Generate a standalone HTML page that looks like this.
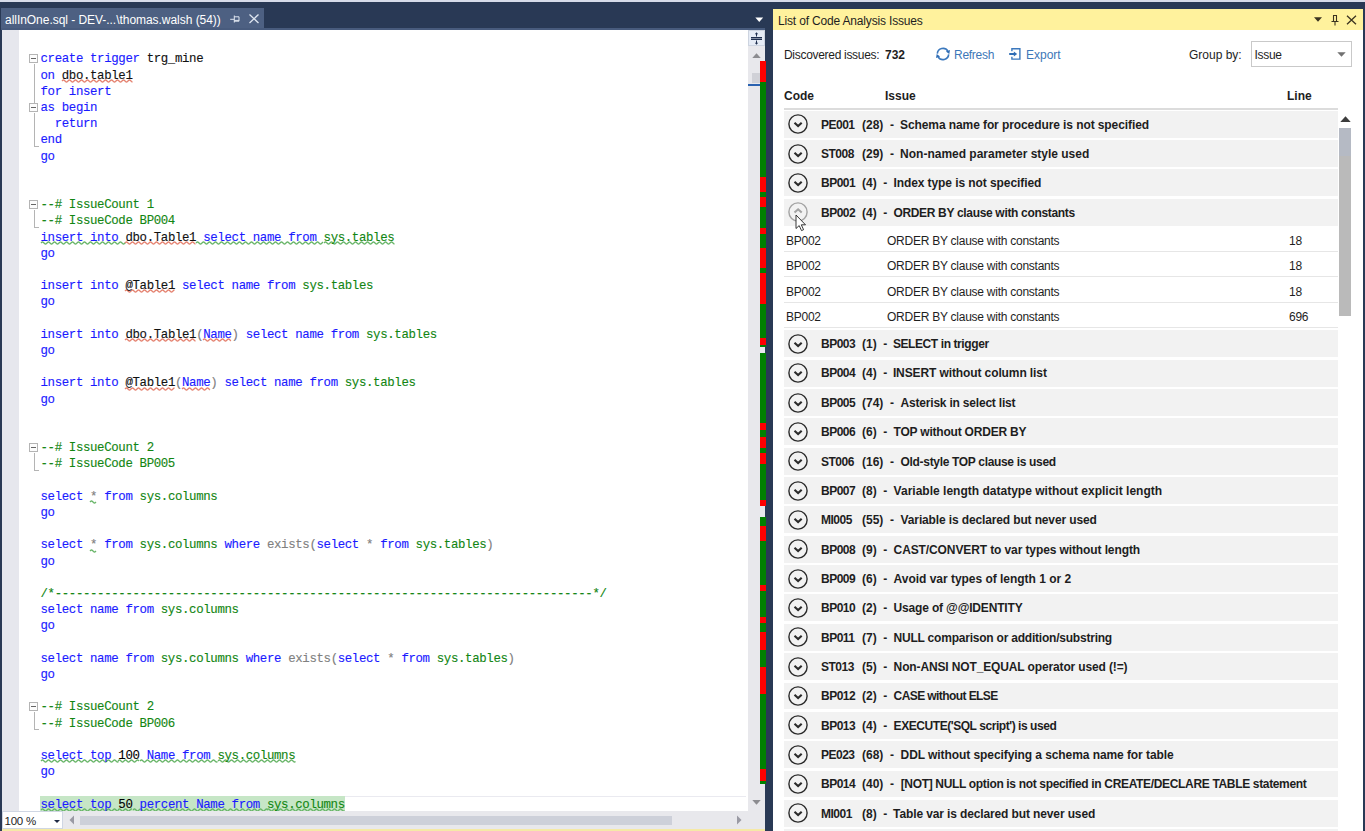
<!DOCTYPE html><html><head><meta charset="utf-8"><style>

html,body{margin:0;padding:0;}
body{width:1365px;height:831px;overflow:hidden;position:relative;background:#293955;font-family:"Liberation Sans",sans-serif;}
.ab{position:absolute;}
.code{position:absolute;left:40.5px;font-family:"Liberation Mono",monospace;font-size:12.4px;letter-spacing:-0.36px;-webkit-text-stroke:0.12px currentColor;line-height:16px;height:16px;white-space:pre;}
.k{color:#1a1aff}.i{color:#111}.c{color:#128612}.s{color:#128612}.o{color:#808080}.n{color:#000}
.sqr{text-decoration:underline wavy #e0321e;text-decoration-thickness:1px;text-underline-offset:2px;text-decoration-skip-ink:none;}
.sqg{text-decoration:underline wavy #3fa83f;text-decoration-thickness:1px;text-underline-offset:2px;text-decoration-skip-ink:none;}
.grp{position:absolute;left:784px;width:554px;height:26.9px;margin-top:0.2px;background:#f2f2f2;}
.gt{position:absolute;left:37px;top:0;font:bold 12px "Liberation Sans",sans-serif;color:#1e1e1e;white-space:pre;line-height:16px;}
.child{position:absolute;left:784px;width:554px;height:25.27px;border-bottom:1.5px solid #e6e6e6;box-sizing:border-box;}
.gtx{position:absolute;font:bold 12px "Liberation Sans",sans-serif;line-height:16px;color:#1e1e1e;white-space:pre;}
.ct{position:absolute;letter-spacing:-0.25px;font:12px "Liberation Sans",sans-serif;color:#1e1e1e;white-space:pre;line-height:16px;}

</style></head><body>
<div class="ab" style="left:0;top:0;width:1365px;height:2px;background:#d6dbe9"></div>
<div class="ab" style="left:1px;top:8px;width:263px;height:20px;background:#4d6082"></div>
<div class="ab" style="left:1px;top:27.5px;width:764px;height:2.5px;background:#485b7d"></div>
<div class="ab" style="left:5px;top:11.7px;font-size:12px;line-height:16px;color:#fff;letter-spacing:-0.04px;white-space:pre">allInOne.sql - DEV-...\thomas.walsh (54))</div>
<svg class="ab" style="left:229px;top:14px" width="12" height="10" viewBox="0 0 12 10"><path d="M1.2 5.3H5.3M5.3 1.5V8.5M5.3 2.8H10V7.2H5.3M5.3 6.4H10" fill="none" stroke="#dfe6f0" stroke-width="1"/></svg>
<svg class="ab" style="left:248px;top:13px" width="12" height="11" viewBox="0 0 12 11"><path d="M1.5 1.5L10.5 10M10.5 1.5L1.5 10" fill="none" stroke="#dfe6f0" stroke-width="1.3"/></svg>
<svg class="ab" style="left:755px;top:17px" width="9" height="6" viewBox="0 0 9 6"><path d="M0.3 0.5H8.2L4.25 5z" fill="#fff"/></svg>
<div class="ab" style="left:2px;top:30px;width:746px;height:781px;background:#fff"></div>
<div class="ab" style="left:2px;top:30px;width:17px;height:781px;background:#e6e7ed"></div>
<div class="ab" style="left:40px;top:796px;width:706px;height:15px;border-top:1px solid #eaeaf0;"></div>
<div class="ab" style="left:40px;top:795.5px;width:305px;height:16px;background:#c6e6c6"></div>
<div class="ab" style="left:29px;top:54px;width:7px;height:7px;border:1px solid #b4b4b4;background:#fcfcfc"></div>
<div class="ab" style="left:31px;top:58px;width:5px;height:1px;background:#666"></div>
<div class="ab" style="left:34px;top:64px;width:1px;height:39px;background:#b4b4b4"></div>
<div class="ab" style="left:29px;top:103px;width:7px;height:7px;border:1px solid #b4b4b4;background:#fcfcfc"></div>
<div class="ab" style="left:31px;top:107px;width:5px;height:1px;background:#666"></div>
<div class="ab" style="left:34px;top:113px;width:1px;height:34px;background:#b4b4b4"></div>
<div class="ab" style="left:34px;top:146px;width:4.5px;height:1px;background:#b4b4b4"></div>
<div class="ab" style="left:29px;top:200px;width:7px;height:7px;border:1px solid #b4b4b4;background:#fcfcfc"></div>
<div class="ab" style="left:31px;top:204px;width:5px;height:1px;background:#666"></div>
<div class="ab" style="left:34px;top:210px;width:1px;height:18px;background:#b4b4b4"></div>
<div class="ab" style="left:34px;top:227px;width:4.5px;height:1px;background:#b4b4b4"></div>
<div class="ab" style="left:29px;top:443px;width:7px;height:7px;border:1px solid #b4b4b4;background:#fcfcfc"></div>
<div class="ab" style="left:31px;top:447px;width:5px;height:1px;background:#666"></div>
<div class="ab" style="left:34px;top:453px;width:1px;height:18px;background:#b4b4b4"></div>
<div class="ab" style="left:34px;top:470px;width:4.5px;height:1px;background:#b4b4b4"></div>
<div class="ab" style="left:29px;top:702px;width:7px;height:7px;border:1px solid #b4b4b4;background:#fcfcfc"></div>
<div class="ab" style="left:31px;top:706px;width:5px;height:1px;background:#666"></div>
<div class="ab" style="left:34px;top:712px;width:1px;height:18px;background:#b4b4b4"></div>
<div class="ab" style="left:34px;top:729px;width:4.5px;height:1px;background:#b4b4b4"></div>
<div class="code" style="top:51.40px"><span class="k">create trigger </span><span class="i">trg_mine</span></div>
<svg class="ab" style="left:61.74px;top:78.80px;overflow:visible" width="71" height="4"><polyline points="0.00,2.00 0.50,1.50 1.00,1.13 1.50,1.00 2.00,1.13 2.50,1.50 3.00,2.00 3.50,2.50 4.00,2.87 4.50,3.00 5.00,2.87 5.50,2.50 6.00,2.00 6.50,1.50 7.00,1.13 7.50,1.00 8.00,1.13 8.50,1.50 9.00,2.00 9.50,2.50 10.00,2.87 10.50,3.00 11.00,2.87 11.50,2.50 12.00,2.00 12.50,1.50 13.00,1.13 13.50,1.00 14.00,1.13 14.50,1.50 15.00,2.00 15.50,2.50 16.00,2.87 16.50,3.00 17.00,2.87 17.50,2.50 18.00,2.00 18.50,1.50 19.00,1.13 19.50,1.00 20.00,1.13 20.50,1.50 21.00,2.00 21.50,2.50 22.00,2.87 22.50,3.00 23.00,2.87 23.50,2.50 24.00,2.00 24.50,1.50 25.00,1.13 25.50,1.00 26.00,1.13 26.50,1.50 27.00,2.00 27.50,2.50 28.00,2.87 28.50,3.00 29.00,2.87 29.50,2.50 30.00,2.00 30.50,1.50 31.00,1.13 31.50,1.00 32.00,1.13 32.50,1.50 33.00,2.00 33.50,2.50 34.00,2.87 34.50,3.00 35.00,2.87 35.50,2.50 36.00,2.00 36.50,1.50 37.00,1.13 37.50,1.00 38.00,1.13 38.50,1.50 39.00,2.00 39.50,2.50 40.00,2.87 40.50,3.00 41.00,2.87 41.50,2.50 42.00,2.00 42.50,1.50 43.00,1.13 43.50,1.00 44.00,1.13 44.50,1.50 45.00,2.00 45.50,2.50 46.00,2.87 46.50,3.00 47.00,2.87 47.50,2.50 48.00,2.00 48.50,1.50 49.00,1.13 49.50,1.00 50.00,1.13 50.50,1.50 51.00,2.00 51.50,2.50 52.00,2.87 52.50,3.00 53.00,2.87 53.50,2.50 54.00,2.00 54.50,1.50 55.00,1.13 55.50,1.00 56.00,1.13 56.50,1.50 57.00,2.00 57.50,2.50 58.00,2.87 58.50,3.00 59.00,2.87 59.50,2.50 60.00,2.00 60.50,1.50 61.00,1.13 61.50,1.00 62.00,1.13 62.50,1.50 63.00,2.00 63.50,2.50 64.00,2.87 64.50,3.00 65.00,2.87 65.50,2.50 66.00,2.00 66.50,1.50 67.00,1.13 67.50,1.00 68.00,1.13 68.50,1.50 69.00,2.00 69.50,2.50 70.00,2.87 70.50,3.00" fill="none" stroke="#e4806e" stroke-width="1.3"/></svg>
<div class="code" style="top:67.60px"><span class="k">on </span><span class="i">dbo.table1</span></div>
<div class="code" style="top:83.80px"><span class="k">for insert</span></div>
<div class="code" style="top:100.00px"><span class="k">as begin</span></div>
<div class="code" style="top:116.20px"><span class="k">  return</span></div>
<div class="code" style="top:132.40px"><span class="k">end</span></div>
<div class="code" style="top:148.60px"><span class="k">go</span></div>
<div class="code" style="top:197.20px"><span class="c">--# IssueCount 1</span></div>
<div class="code" style="top:213.40px"><span class="c">--# IssueCode BP004</span></div>
<svg class="ab" style="left:40.5px;top:240.80px;overflow:visible" width="85" height="4"><polyline points="0.00,2.00 0.50,1.50 1.00,1.13 1.50,1.00 2.00,1.13 2.50,1.50 3.00,2.00 3.50,2.50 4.00,2.87 4.50,3.00 5.00,2.87 5.50,2.50 6.00,2.00 6.50,1.50 7.00,1.13 7.50,1.00 8.00,1.13 8.50,1.50 9.00,2.00 9.50,2.50 10.00,2.87 10.50,3.00 11.00,2.87 11.50,2.50 12.00,2.00 12.50,1.50 13.00,1.13 13.50,1.00 14.00,1.13 14.50,1.50 15.00,2.00 15.50,2.50 16.00,2.87 16.50,3.00 17.00,2.87 17.50,2.50 18.00,2.00 18.50,1.50 19.00,1.13 19.50,1.00 20.00,1.13 20.50,1.50 21.00,2.00 21.50,2.50 22.00,2.87 22.50,3.00 23.00,2.87 23.50,2.50 24.00,2.00 24.50,1.50 25.00,1.13 25.50,1.00 26.00,1.13 26.50,1.50 27.00,2.00 27.50,2.50 28.00,2.87 28.50,3.00 29.00,2.87 29.50,2.50 30.00,2.00 30.50,1.50 31.00,1.13 31.50,1.00 32.00,1.13 32.50,1.50 33.00,2.00 33.50,2.50 34.00,2.87 34.50,3.00 35.00,2.87 35.50,2.50 36.00,2.00 36.50,1.50 37.00,1.13 37.50,1.00 38.00,1.13 38.50,1.50 39.00,2.00 39.50,2.50 40.00,2.87 40.50,3.00 41.00,2.87 41.50,2.50 42.00,2.00 42.50,1.50 43.00,1.13 43.50,1.00 44.00,1.13 44.50,1.50 45.00,2.00 45.50,2.50 46.00,2.87 46.50,3.00 47.00,2.87 47.50,2.50 48.00,2.00 48.50,1.50 49.00,1.13 49.50,1.00 50.00,1.13 50.50,1.50 51.00,2.00 51.50,2.50 52.00,2.87 52.50,3.00 53.00,2.87 53.50,2.50 54.00,2.00 54.50,1.50 55.00,1.13 55.50,1.00 56.00,1.13 56.50,1.50 57.00,2.00 57.50,2.50 58.00,2.87 58.50,3.00 59.00,2.87 59.50,2.50 60.00,2.00 60.50,1.50 61.00,1.13 61.50,1.00 62.00,1.13 62.50,1.50 63.00,2.00 63.50,2.50 64.00,2.87 64.50,3.00 65.00,2.87 65.50,2.50 66.00,2.00 66.50,1.50 67.00,1.13 67.50,1.00 68.00,1.13 68.50,1.50 69.00,2.00 69.50,2.50 70.00,2.87 70.50,3.00 71.00,2.87 71.50,2.50 72.00,2.00 72.50,1.50 73.00,1.13 73.50,1.00 74.00,1.13 74.50,1.50 75.00,2.00 75.50,2.50 76.00,2.87 76.50,3.00 77.00,2.87 77.50,2.50 78.00,2.00 78.50,1.50 79.00,1.13 79.50,1.00 80.00,1.13 80.50,1.50 81.00,2.00 81.50,2.50 82.00,2.87 82.50,3.00 83.00,2.87 83.50,2.50 84.00,2.00 84.50,1.50" fill="none" stroke="#66b466" stroke-width="1.3"/></svg>
<svg class="ab" style="left:125.46000000000001px;top:240.80px;overflow:visible" width="71" height="4"><polyline points="0.00,2.00 0.50,1.50 1.00,1.13 1.50,1.00 2.00,1.13 2.50,1.50 3.00,2.00 3.50,2.50 4.00,2.87 4.50,3.00 5.00,2.87 5.50,2.50 6.00,2.00 6.50,1.50 7.00,1.13 7.50,1.00 8.00,1.13 8.50,1.50 9.00,2.00 9.50,2.50 10.00,2.87 10.50,3.00 11.00,2.87 11.50,2.50 12.00,2.00 12.50,1.50 13.00,1.13 13.50,1.00 14.00,1.13 14.50,1.50 15.00,2.00 15.50,2.50 16.00,2.87 16.50,3.00 17.00,2.87 17.50,2.50 18.00,2.00 18.50,1.50 19.00,1.13 19.50,1.00 20.00,1.13 20.50,1.50 21.00,2.00 21.50,2.50 22.00,2.87 22.50,3.00 23.00,2.87 23.50,2.50 24.00,2.00 24.50,1.50 25.00,1.13 25.50,1.00 26.00,1.13 26.50,1.50 27.00,2.00 27.50,2.50 28.00,2.87 28.50,3.00 29.00,2.87 29.50,2.50 30.00,2.00 30.50,1.50 31.00,1.13 31.50,1.00 32.00,1.13 32.50,1.50 33.00,2.00 33.50,2.50 34.00,2.87 34.50,3.00 35.00,2.87 35.50,2.50 36.00,2.00 36.50,1.50 37.00,1.13 37.50,1.00 38.00,1.13 38.50,1.50 39.00,2.00 39.50,2.50 40.00,2.87 40.50,3.00 41.00,2.87 41.50,2.50 42.00,2.00 42.50,1.50 43.00,1.13 43.50,1.00 44.00,1.13 44.50,1.50 45.00,2.00 45.50,2.50 46.00,2.87 46.50,3.00 47.00,2.87 47.50,2.50 48.00,2.00 48.50,1.50 49.00,1.13 49.50,1.00 50.00,1.13 50.50,1.50 51.00,2.00 51.50,2.50 52.00,2.87 52.50,3.00 53.00,2.87 53.50,2.50 54.00,2.00 54.50,1.50 55.00,1.13 55.50,1.00 56.00,1.13 56.50,1.50 57.00,2.00 57.50,2.50 58.00,2.87 58.50,3.00 59.00,2.87 59.50,2.50 60.00,2.00 60.50,1.50 61.00,1.13 61.50,1.00 62.00,1.13 62.50,1.50 63.00,2.00 63.50,2.50 64.00,2.87 64.50,3.00 65.00,2.87 65.50,2.50 66.00,2.00 66.50,1.50 67.00,1.13 67.50,1.00 68.00,1.13 68.50,1.50 69.00,2.00 69.50,2.50 70.00,2.87 70.50,3.00" fill="none" stroke="#e4806e" stroke-width="1.3"/></svg>
<svg class="ab" style="left:196.26px;top:240.80px;overflow:visible" width="127" height="4"><polyline points="0.00,2.00 0.50,1.50 1.00,1.13 1.50,1.00 2.00,1.13 2.50,1.50 3.00,2.00 3.50,2.50 4.00,2.87 4.50,3.00 5.00,2.87 5.50,2.50 6.00,2.00 6.50,1.50 7.00,1.13 7.50,1.00 8.00,1.13 8.50,1.50 9.00,2.00 9.50,2.50 10.00,2.87 10.50,3.00 11.00,2.87 11.50,2.50 12.00,2.00 12.50,1.50 13.00,1.13 13.50,1.00 14.00,1.13 14.50,1.50 15.00,2.00 15.50,2.50 16.00,2.87 16.50,3.00 17.00,2.87 17.50,2.50 18.00,2.00 18.50,1.50 19.00,1.13 19.50,1.00 20.00,1.13 20.50,1.50 21.00,2.00 21.50,2.50 22.00,2.87 22.50,3.00 23.00,2.87 23.50,2.50 24.00,2.00 24.50,1.50 25.00,1.13 25.50,1.00 26.00,1.13 26.50,1.50 27.00,2.00 27.50,2.50 28.00,2.87 28.50,3.00 29.00,2.87 29.50,2.50 30.00,2.00 30.50,1.50 31.00,1.13 31.50,1.00 32.00,1.13 32.50,1.50 33.00,2.00 33.50,2.50 34.00,2.87 34.50,3.00 35.00,2.87 35.50,2.50 36.00,2.00 36.50,1.50 37.00,1.13 37.50,1.00 38.00,1.13 38.50,1.50 39.00,2.00 39.50,2.50 40.00,2.87 40.50,3.00 41.00,2.87 41.50,2.50 42.00,2.00 42.50,1.50 43.00,1.13 43.50,1.00 44.00,1.13 44.50,1.50 45.00,2.00 45.50,2.50 46.00,2.87 46.50,3.00 47.00,2.87 47.50,2.50 48.00,2.00 48.50,1.50 49.00,1.13 49.50,1.00 50.00,1.13 50.50,1.50 51.00,2.00 51.50,2.50 52.00,2.87 52.50,3.00 53.00,2.87 53.50,2.50 54.00,2.00 54.50,1.50 55.00,1.13 55.50,1.00 56.00,1.13 56.50,1.50 57.00,2.00 57.50,2.50 58.00,2.87 58.50,3.00 59.00,2.87 59.50,2.50 60.00,2.00 60.50,1.50 61.00,1.13 61.50,1.00 62.00,1.13 62.50,1.50 63.00,2.00 63.50,2.50 64.00,2.87 64.50,3.00 65.00,2.87 65.50,2.50 66.00,2.00 66.50,1.50 67.00,1.13 67.50,1.00 68.00,1.13 68.50,1.50 69.00,2.00 69.50,2.50 70.00,2.87 70.50,3.00 71.00,2.87 71.50,2.50 72.00,2.00 72.50,1.50 73.00,1.13 73.50,1.00 74.00,1.13 74.50,1.50 75.00,2.00 75.50,2.50 76.00,2.87 76.50,3.00 77.00,2.87 77.50,2.50 78.00,2.00 78.50,1.50 79.00,1.13 79.50,1.00 80.00,1.13 80.50,1.50 81.00,2.00 81.50,2.50 82.00,2.87 82.50,3.00 83.00,2.87 83.50,2.50 84.00,2.00 84.50,1.50 85.00,1.13 85.50,1.00 86.00,1.13 86.50,1.50 87.00,2.00 87.50,2.50 88.00,2.87 88.50,3.00 89.00,2.87 89.50,2.50 90.00,2.00 90.50,1.50 91.00,1.13 91.50,1.00 92.00,1.13 92.50,1.50 93.00,2.00 93.50,2.50 94.00,2.87 94.50,3.00 95.00,2.87 95.50,2.50 96.00,2.00 96.50,1.50 97.00,1.13 97.50,1.00 98.00,1.13 98.50,1.50 99.00,2.00 99.50,2.50 100.00,2.87 100.50,3.00 101.00,2.87 101.50,2.50 102.00,2.00 102.50,1.50 103.00,1.13 103.50,1.00 104.00,1.13 104.50,1.50 105.00,2.00 105.50,2.50 106.00,2.87 106.50,3.00 107.00,2.87 107.50,2.50 108.00,2.00 108.50,1.50 109.00,1.13 109.50,1.00 110.00,1.13 110.50,1.50 111.00,2.00 111.50,2.50 112.00,2.87 112.50,3.00 113.00,2.87 113.50,2.50 114.00,2.00 114.50,1.50 115.00,1.13 115.50,1.00 116.00,1.13 116.50,1.50 117.00,2.00 117.50,2.50 118.00,2.87 118.50,3.00 119.00,2.87 119.50,2.50 120.00,2.00 120.50,1.50 121.00,1.13 121.50,1.00 122.00,1.13 122.50,1.50 123.00,2.00 123.50,2.50 124.00,2.87 124.50,3.00 125.00,2.87 125.50,2.50 126.00,2.00 126.50,1.50 127.00,1.13" fill="none" stroke="#66b466" stroke-width="1.3"/></svg>
<svg class="ab" style="left:323.7px;top:240.80px;overflow:visible" width="71" height="4"><polyline points="0.00,2.00 0.50,1.50 1.00,1.13 1.50,1.00 2.00,1.13 2.50,1.50 3.00,2.00 3.50,2.50 4.00,2.87 4.50,3.00 5.00,2.87 5.50,2.50 6.00,2.00 6.50,1.50 7.00,1.13 7.50,1.00 8.00,1.13 8.50,1.50 9.00,2.00 9.50,2.50 10.00,2.87 10.50,3.00 11.00,2.87 11.50,2.50 12.00,2.00 12.50,1.50 13.00,1.13 13.50,1.00 14.00,1.13 14.50,1.50 15.00,2.00 15.50,2.50 16.00,2.87 16.50,3.00 17.00,2.87 17.50,2.50 18.00,2.00 18.50,1.50 19.00,1.13 19.50,1.00 20.00,1.13 20.50,1.50 21.00,2.00 21.50,2.50 22.00,2.87 22.50,3.00 23.00,2.87 23.50,2.50 24.00,2.00 24.50,1.50 25.00,1.13 25.50,1.00 26.00,1.13 26.50,1.50 27.00,2.00 27.50,2.50 28.00,2.87 28.50,3.00 29.00,2.87 29.50,2.50 30.00,2.00 30.50,1.50 31.00,1.13 31.50,1.00 32.00,1.13 32.50,1.50 33.00,2.00 33.50,2.50 34.00,2.87 34.50,3.00 35.00,2.87 35.50,2.50 36.00,2.00 36.50,1.50 37.00,1.13 37.50,1.00 38.00,1.13 38.50,1.50 39.00,2.00 39.50,2.50 40.00,2.87 40.50,3.00 41.00,2.87 41.50,2.50 42.00,2.00 42.50,1.50 43.00,1.13 43.50,1.00 44.00,1.13 44.50,1.50 45.00,2.00 45.50,2.50 46.00,2.87 46.50,3.00 47.00,2.87 47.50,2.50 48.00,2.00 48.50,1.50 49.00,1.13 49.50,1.00 50.00,1.13 50.50,1.50 51.00,2.00 51.50,2.50 52.00,2.87 52.50,3.00 53.00,2.87 53.50,2.50 54.00,2.00 54.50,1.50 55.00,1.13 55.50,1.00 56.00,1.13 56.50,1.50 57.00,2.00 57.50,2.50 58.00,2.87 58.50,3.00 59.00,2.87 59.50,2.50 60.00,2.00 60.50,1.50 61.00,1.13 61.50,1.00 62.00,1.13 62.50,1.50 63.00,2.00 63.50,2.50 64.00,2.87 64.50,3.00 65.00,2.87 65.50,2.50 66.00,2.00 66.50,1.50 67.00,1.13 67.50,1.00 68.00,1.13 68.50,1.50 69.00,2.00 69.50,2.50 70.00,2.87 70.50,3.00" fill="none" stroke="#66b466" stroke-width="1.3"/></svg>
<div class="code" style="top:229.60px"><span class="k">insert into </span><span class="i">dbo.Table1</span><span class="k"> select name from </span><span class="s">sys.tables</span></div>
<div class="code" style="top:245.80px"><span class="k">go</span></div>
<svg class="ab" style="left:125.46000000000001px;top:289.40px;overflow:visible" width="50" height="4"><polyline points="0.00,2.00 0.50,1.50 1.00,1.13 1.50,1.00 2.00,1.13 2.50,1.50 3.00,2.00 3.50,2.50 4.00,2.87 4.50,3.00 5.00,2.87 5.50,2.50 6.00,2.00 6.50,1.50 7.00,1.13 7.50,1.00 8.00,1.13 8.50,1.50 9.00,2.00 9.50,2.50 10.00,2.87 10.50,3.00 11.00,2.87 11.50,2.50 12.00,2.00 12.50,1.50 13.00,1.13 13.50,1.00 14.00,1.13 14.50,1.50 15.00,2.00 15.50,2.50 16.00,2.87 16.50,3.00 17.00,2.87 17.50,2.50 18.00,2.00 18.50,1.50 19.00,1.13 19.50,1.00 20.00,1.13 20.50,1.50 21.00,2.00 21.50,2.50 22.00,2.87 22.50,3.00 23.00,2.87 23.50,2.50 24.00,2.00 24.50,1.50 25.00,1.13 25.50,1.00 26.00,1.13 26.50,1.50 27.00,2.00 27.50,2.50 28.00,2.87 28.50,3.00 29.00,2.87 29.50,2.50 30.00,2.00 30.50,1.50 31.00,1.13 31.50,1.00 32.00,1.13 32.50,1.50 33.00,2.00 33.50,2.50 34.00,2.87 34.50,3.00 35.00,2.87 35.50,2.50 36.00,2.00 36.50,1.50 37.00,1.13 37.50,1.00 38.00,1.13 38.50,1.50 39.00,2.00 39.50,2.50 40.00,2.87 40.50,3.00 41.00,2.87 41.50,2.50 42.00,2.00 42.50,1.50 43.00,1.13 43.50,1.00 44.00,1.13 44.50,1.50 45.00,2.00 45.50,2.50 46.00,2.87 46.50,3.00 47.00,2.87 47.50,2.50 48.00,2.00 48.50,1.50 49.00,1.13 49.50,1.00" fill="none" stroke="#e4806e" stroke-width="1.3"/></svg>
<div class="code" style="top:278.20px"><span class="k">insert into </span><span class="i">@Table1</span><span class="k"> select name from </span><span class="s">sys.tables</span></div>
<div class="code" style="top:294.40px"><span class="k">go</span></div>
<svg class="ab" style="left:125.46000000000001px;top:338.00px;overflow:visible" width="71" height="4"><polyline points="0.00,2.00 0.50,1.50 1.00,1.13 1.50,1.00 2.00,1.13 2.50,1.50 3.00,2.00 3.50,2.50 4.00,2.87 4.50,3.00 5.00,2.87 5.50,2.50 6.00,2.00 6.50,1.50 7.00,1.13 7.50,1.00 8.00,1.13 8.50,1.50 9.00,2.00 9.50,2.50 10.00,2.87 10.50,3.00 11.00,2.87 11.50,2.50 12.00,2.00 12.50,1.50 13.00,1.13 13.50,1.00 14.00,1.13 14.50,1.50 15.00,2.00 15.50,2.50 16.00,2.87 16.50,3.00 17.00,2.87 17.50,2.50 18.00,2.00 18.50,1.50 19.00,1.13 19.50,1.00 20.00,1.13 20.50,1.50 21.00,2.00 21.50,2.50 22.00,2.87 22.50,3.00 23.00,2.87 23.50,2.50 24.00,2.00 24.50,1.50 25.00,1.13 25.50,1.00 26.00,1.13 26.50,1.50 27.00,2.00 27.50,2.50 28.00,2.87 28.50,3.00 29.00,2.87 29.50,2.50 30.00,2.00 30.50,1.50 31.00,1.13 31.50,1.00 32.00,1.13 32.50,1.50 33.00,2.00 33.50,2.50 34.00,2.87 34.50,3.00 35.00,2.87 35.50,2.50 36.00,2.00 36.50,1.50 37.00,1.13 37.50,1.00 38.00,1.13 38.50,1.50 39.00,2.00 39.50,2.50 40.00,2.87 40.50,3.00 41.00,2.87 41.50,2.50 42.00,2.00 42.50,1.50 43.00,1.13 43.50,1.00 44.00,1.13 44.50,1.50 45.00,2.00 45.50,2.50 46.00,2.87 46.50,3.00 47.00,2.87 47.50,2.50 48.00,2.00 48.50,1.50 49.00,1.13 49.50,1.00 50.00,1.13 50.50,1.50 51.00,2.00 51.50,2.50 52.00,2.87 52.50,3.00 53.00,2.87 53.50,2.50 54.00,2.00 54.50,1.50 55.00,1.13 55.50,1.00 56.00,1.13 56.50,1.50 57.00,2.00 57.50,2.50 58.00,2.87 58.50,3.00 59.00,2.87 59.50,2.50 60.00,2.00 60.50,1.50 61.00,1.13 61.50,1.00 62.00,1.13 62.50,1.50 63.00,2.00 63.50,2.50 64.00,2.87 64.50,3.00 65.00,2.87 65.50,2.50 66.00,2.00 66.50,1.50 67.00,1.13 67.50,1.00 68.00,1.13 68.50,1.50 69.00,2.00 69.50,2.50 70.00,2.87 70.50,3.00" fill="none" stroke="#e4806e" stroke-width="1.3"/></svg>
<svg class="ab" style="left:203.34px;top:338.00px;overflow:visible" width="28" height="4"><polyline points="0.00,2.00 0.50,1.50 1.00,1.13 1.50,1.00 2.00,1.13 2.50,1.50 3.00,2.00 3.50,2.50 4.00,2.87 4.50,3.00 5.00,2.87 5.50,2.50 6.00,2.00 6.50,1.50 7.00,1.13 7.50,1.00 8.00,1.13 8.50,1.50 9.00,2.00 9.50,2.50 10.00,2.87 10.50,3.00 11.00,2.87 11.50,2.50 12.00,2.00 12.50,1.50 13.00,1.13 13.50,1.00 14.00,1.13 14.50,1.50 15.00,2.00 15.50,2.50 16.00,2.87 16.50,3.00 17.00,2.87 17.50,2.50 18.00,2.00 18.50,1.50 19.00,1.13 19.50,1.00 20.00,1.13 20.50,1.50 21.00,2.00 21.50,2.50 22.00,2.87 22.50,3.00 23.00,2.87 23.50,2.50 24.00,2.00 24.50,1.50 25.00,1.13 25.50,1.00 26.00,1.13 26.50,1.50 27.00,2.00 27.50,2.50 28.00,2.87" fill="none" stroke="#e4806e" stroke-width="1.3"/></svg>
<div class="code" style="top:326.80px"><span class="k">insert into </span><span class="i">dbo.Table1</span><span class="o">(</span><span class="k">Name</span><span class="o">)</span><span class="k"> select name from </span><span class="s">sys.tables</span></div>
<div class="code" style="top:343.00px"><span class="k">go</span></div>
<svg class="ab" style="left:125.46000000000001px;top:386.60px;overflow:visible" width="50" height="4"><polyline points="0.00,2.00 0.50,1.50 1.00,1.13 1.50,1.00 2.00,1.13 2.50,1.50 3.00,2.00 3.50,2.50 4.00,2.87 4.50,3.00 5.00,2.87 5.50,2.50 6.00,2.00 6.50,1.50 7.00,1.13 7.50,1.00 8.00,1.13 8.50,1.50 9.00,2.00 9.50,2.50 10.00,2.87 10.50,3.00 11.00,2.87 11.50,2.50 12.00,2.00 12.50,1.50 13.00,1.13 13.50,1.00 14.00,1.13 14.50,1.50 15.00,2.00 15.50,2.50 16.00,2.87 16.50,3.00 17.00,2.87 17.50,2.50 18.00,2.00 18.50,1.50 19.00,1.13 19.50,1.00 20.00,1.13 20.50,1.50 21.00,2.00 21.50,2.50 22.00,2.87 22.50,3.00 23.00,2.87 23.50,2.50 24.00,2.00 24.50,1.50 25.00,1.13 25.50,1.00 26.00,1.13 26.50,1.50 27.00,2.00 27.50,2.50 28.00,2.87 28.50,3.00 29.00,2.87 29.50,2.50 30.00,2.00 30.50,1.50 31.00,1.13 31.50,1.00 32.00,1.13 32.50,1.50 33.00,2.00 33.50,2.50 34.00,2.87 34.50,3.00 35.00,2.87 35.50,2.50 36.00,2.00 36.50,1.50 37.00,1.13 37.50,1.00 38.00,1.13 38.50,1.50 39.00,2.00 39.50,2.50 40.00,2.87 40.50,3.00 41.00,2.87 41.50,2.50 42.00,2.00 42.50,1.50 43.00,1.13 43.50,1.00 44.00,1.13 44.50,1.50 45.00,2.00 45.50,2.50 46.00,2.87 46.50,3.00 47.00,2.87 47.50,2.50 48.00,2.00 48.50,1.50 49.00,1.13 49.50,1.00" fill="none" stroke="#e4806e" stroke-width="1.3"/></svg>
<svg class="ab" style="left:182.1px;top:386.60px;overflow:visible" width="28" height="4"><polyline points="0.00,2.00 0.50,1.50 1.00,1.13 1.50,1.00 2.00,1.13 2.50,1.50 3.00,2.00 3.50,2.50 4.00,2.87 4.50,3.00 5.00,2.87 5.50,2.50 6.00,2.00 6.50,1.50 7.00,1.13 7.50,1.00 8.00,1.13 8.50,1.50 9.00,2.00 9.50,2.50 10.00,2.87 10.50,3.00 11.00,2.87 11.50,2.50 12.00,2.00 12.50,1.50 13.00,1.13 13.50,1.00 14.00,1.13 14.50,1.50 15.00,2.00 15.50,2.50 16.00,2.87 16.50,3.00 17.00,2.87 17.50,2.50 18.00,2.00 18.50,1.50 19.00,1.13 19.50,1.00 20.00,1.13 20.50,1.50 21.00,2.00 21.50,2.50 22.00,2.87 22.50,3.00 23.00,2.87 23.50,2.50 24.00,2.00 24.50,1.50 25.00,1.13 25.50,1.00 26.00,1.13 26.50,1.50 27.00,2.00 27.50,2.50 28.00,2.87" fill="none" stroke="#e4806e" stroke-width="1.3"/></svg>
<div class="code" style="top:375.40px"><span class="k">insert into </span><span class="i">@Table1</span><span class="o">(</span><span class="k">Name</span><span class="o">)</span><span class="k"> select name from </span><span class="s">sys.tables</span></div>
<div class="code" style="top:391.60px"><span class="k">go</span></div>
<div class="code" style="top:440.20px"><span class="c">--# IssueCount 2</span></div>
<div class="code" style="top:456.40px"><span class="c">--# IssueCode BP005</span></div>
<svg class="ab" style="left:90.06px;top:500.00px;overflow:visible" width="6" height="4"><polyline points="0.00,2.00 0.50,1.50 1.00,1.13 1.50,1.00 2.00,1.13 2.50,1.50 3.00,2.00 3.50,2.50 4.00,2.87 4.50,3.00 5.00,2.87 5.50,2.50 6.00,2.00" fill="none" stroke="#66b466" stroke-width="1.3"/></svg>
<div class="code" style="top:488.80px"><span class="k">select </span><span class="o">*</span><span class="k"> from </span><span class="s">sys.columns</span></div>
<div class="code" style="top:505.00px"><span class="k">go</span></div>
<svg class="ab" style="left:90.06px;top:548.60px;overflow:visible" width="6" height="4"><polyline points="0.00,2.00 0.50,1.50 1.00,1.13 1.50,1.00 2.00,1.13 2.50,1.50 3.00,2.00 3.50,2.50 4.00,2.87 4.50,3.00 5.00,2.87 5.50,2.50 6.00,2.00" fill="none" stroke="#66b466" stroke-width="1.3"/></svg>
<div class="code" style="top:537.40px"><span class="k">select </span><span class="o">*</span><span class="k"> from </span><span class="s">sys.columns</span><span class="k"> where </span><span class="o">exists(</span><span class="k">select </span><span class="o">*</span><span class="k"> from </span><span class="s">sys.tables</span><span class="o">)</span></div>
<div class="code" style="top:553.60px"><span class="k">go</span></div>
<div class="code" style="top:586.00px"><span class="c">/*----------------------------------------------------------------------------*/</span></div>
<div class="code" style="top:602.20px"><span class="k">select name from </span><span class="s">sys.columns</span></div>
<div class="code" style="top:618.40px"><span class="k">go</span></div>
<div class="code" style="top:650.80px"><span class="k">select name from </span><span class="s">sys.columns</span><span class="k"> where </span><span class="o">exists(</span><span class="k">select </span><span class="o">*</span><span class="k"> from </span><span class="s">sys.tables</span><span class="o">)</span></div>
<div class="code" style="top:667.00px"><span class="k">go</span></div>
<div class="code" style="top:699.40px"><span class="c">--# IssueCount 2</span></div>
<div class="code" style="top:715.60px"><span class="c">--# IssueCode BP006</span></div>
<svg class="ab" style="left:40.5px;top:759.20px;overflow:visible" width="78" height="4"><polyline points="0.00,2.00 0.50,1.50 1.00,1.13 1.50,1.00 2.00,1.13 2.50,1.50 3.00,2.00 3.50,2.50 4.00,2.87 4.50,3.00 5.00,2.87 5.50,2.50 6.00,2.00 6.50,1.50 7.00,1.13 7.50,1.00 8.00,1.13 8.50,1.50 9.00,2.00 9.50,2.50 10.00,2.87 10.50,3.00 11.00,2.87 11.50,2.50 12.00,2.00 12.50,1.50 13.00,1.13 13.50,1.00 14.00,1.13 14.50,1.50 15.00,2.00 15.50,2.50 16.00,2.87 16.50,3.00 17.00,2.87 17.50,2.50 18.00,2.00 18.50,1.50 19.00,1.13 19.50,1.00 20.00,1.13 20.50,1.50 21.00,2.00 21.50,2.50 22.00,2.87 22.50,3.00 23.00,2.87 23.50,2.50 24.00,2.00 24.50,1.50 25.00,1.13 25.50,1.00 26.00,1.13 26.50,1.50 27.00,2.00 27.50,2.50 28.00,2.87 28.50,3.00 29.00,2.87 29.50,2.50 30.00,2.00 30.50,1.50 31.00,1.13 31.50,1.00 32.00,1.13 32.50,1.50 33.00,2.00 33.50,2.50 34.00,2.87 34.50,3.00 35.00,2.87 35.50,2.50 36.00,2.00 36.50,1.50 37.00,1.13 37.50,1.00 38.00,1.13 38.50,1.50 39.00,2.00 39.50,2.50 40.00,2.87 40.50,3.00 41.00,2.87 41.50,2.50 42.00,2.00 42.50,1.50 43.00,1.13 43.50,1.00 44.00,1.13 44.50,1.50 45.00,2.00 45.50,2.50 46.00,2.87 46.50,3.00 47.00,2.87 47.50,2.50 48.00,2.00 48.50,1.50 49.00,1.13 49.50,1.00 50.00,1.13 50.50,1.50 51.00,2.00 51.50,2.50 52.00,2.87 52.50,3.00 53.00,2.87 53.50,2.50 54.00,2.00 54.50,1.50 55.00,1.13 55.50,1.00 56.00,1.13 56.50,1.50 57.00,2.00 57.50,2.50 58.00,2.87 58.50,3.00 59.00,2.87 59.50,2.50 60.00,2.00 60.50,1.50 61.00,1.13 61.50,1.00 62.00,1.13 62.50,1.50 63.00,2.00 63.50,2.50 64.00,2.87 64.50,3.00 65.00,2.87 65.50,2.50 66.00,2.00 66.50,1.50 67.00,1.13 67.50,1.00 68.00,1.13 68.50,1.50 69.00,2.00 69.50,2.50 70.00,2.87 70.50,3.00 71.00,2.87 71.50,2.50 72.00,2.00 72.50,1.50 73.00,1.13 73.50,1.00 74.00,1.13 74.50,1.50 75.00,2.00 75.50,2.50 76.00,2.87 76.50,3.00 77.00,2.87 77.50,2.50" fill="none" stroke="#66b466" stroke-width="1.3"/></svg>
<svg class="ab" style="left:118.38px;top:759.20px;overflow:visible" width="21" height="4"><polyline points="0.00,2.00 0.50,1.50 1.00,1.13 1.50,1.00 2.00,1.13 2.50,1.50 3.00,2.00 3.50,2.50 4.00,2.87 4.50,3.00 5.00,2.87 5.50,2.50 6.00,2.00 6.50,1.50 7.00,1.13 7.50,1.00 8.00,1.13 8.50,1.50 9.00,2.00 9.50,2.50 10.00,2.87 10.50,3.00 11.00,2.87 11.50,2.50 12.00,2.00 12.50,1.50 13.00,1.13 13.50,1.00 14.00,1.13 14.50,1.50 15.00,2.00 15.50,2.50 16.00,2.87 16.50,3.00 17.00,2.87 17.50,2.50 18.00,2.00 18.50,1.50 19.00,1.13 19.50,1.00 20.00,1.13 20.50,1.50 21.00,2.00" fill="none" stroke="#66b466" stroke-width="1.3"/></svg>
<svg class="ab" style="left:139.62px;top:759.20px;overflow:visible" width="78" height="4"><polyline points="0.00,2.00 0.50,1.50 1.00,1.13 1.50,1.00 2.00,1.13 2.50,1.50 3.00,2.00 3.50,2.50 4.00,2.87 4.50,3.00 5.00,2.87 5.50,2.50 6.00,2.00 6.50,1.50 7.00,1.13 7.50,1.00 8.00,1.13 8.50,1.50 9.00,2.00 9.50,2.50 10.00,2.87 10.50,3.00 11.00,2.87 11.50,2.50 12.00,2.00 12.50,1.50 13.00,1.13 13.50,1.00 14.00,1.13 14.50,1.50 15.00,2.00 15.50,2.50 16.00,2.87 16.50,3.00 17.00,2.87 17.50,2.50 18.00,2.00 18.50,1.50 19.00,1.13 19.50,1.00 20.00,1.13 20.50,1.50 21.00,2.00 21.50,2.50 22.00,2.87 22.50,3.00 23.00,2.87 23.50,2.50 24.00,2.00 24.50,1.50 25.00,1.13 25.50,1.00 26.00,1.13 26.50,1.50 27.00,2.00 27.50,2.50 28.00,2.87 28.50,3.00 29.00,2.87 29.50,2.50 30.00,2.00 30.50,1.50 31.00,1.13 31.50,1.00 32.00,1.13 32.50,1.50 33.00,2.00 33.50,2.50 34.00,2.87 34.50,3.00 35.00,2.87 35.50,2.50 36.00,2.00 36.50,1.50 37.00,1.13 37.50,1.00 38.00,1.13 38.50,1.50 39.00,2.00 39.50,2.50 40.00,2.87 40.50,3.00 41.00,2.87 41.50,2.50 42.00,2.00 42.50,1.50 43.00,1.13 43.50,1.00 44.00,1.13 44.50,1.50 45.00,2.00 45.50,2.50 46.00,2.87 46.50,3.00 47.00,2.87 47.50,2.50 48.00,2.00 48.50,1.50 49.00,1.13 49.50,1.00 50.00,1.13 50.50,1.50 51.00,2.00 51.50,2.50 52.00,2.87 52.50,3.00 53.00,2.87 53.50,2.50 54.00,2.00 54.50,1.50 55.00,1.13 55.50,1.00 56.00,1.13 56.50,1.50 57.00,2.00 57.50,2.50 58.00,2.87 58.50,3.00 59.00,2.87 59.50,2.50 60.00,2.00 60.50,1.50 61.00,1.13 61.50,1.00 62.00,1.13 62.50,1.50 63.00,2.00 63.50,2.50 64.00,2.87 64.50,3.00 65.00,2.87 65.50,2.50 66.00,2.00 66.50,1.50 67.00,1.13 67.50,1.00 68.00,1.13 68.50,1.50 69.00,2.00 69.50,2.50 70.00,2.87 70.50,3.00 71.00,2.87 71.50,2.50 72.00,2.00 72.50,1.50 73.00,1.13 73.50,1.00 74.00,1.13 74.50,1.50 75.00,2.00 75.50,2.50 76.00,2.87 76.50,3.00 77.00,2.87 77.50,2.50" fill="none" stroke="#66b466" stroke-width="1.3"/></svg>
<svg class="ab" style="left:217.5px;top:759.20px;overflow:visible" width="78" height="4"><polyline points="0.00,2.00 0.50,1.50 1.00,1.13 1.50,1.00 2.00,1.13 2.50,1.50 3.00,2.00 3.50,2.50 4.00,2.87 4.50,3.00 5.00,2.87 5.50,2.50 6.00,2.00 6.50,1.50 7.00,1.13 7.50,1.00 8.00,1.13 8.50,1.50 9.00,2.00 9.50,2.50 10.00,2.87 10.50,3.00 11.00,2.87 11.50,2.50 12.00,2.00 12.50,1.50 13.00,1.13 13.50,1.00 14.00,1.13 14.50,1.50 15.00,2.00 15.50,2.50 16.00,2.87 16.50,3.00 17.00,2.87 17.50,2.50 18.00,2.00 18.50,1.50 19.00,1.13 19.50,1.00 20.00,1.13 20.50,1.50 21.00,2.00 21.50,2.50 22.00,2.87 22.50,3.00 23.00,2.87 23.50,2.50 24.00,2.00 24.50,1.50 25.00,1.13 25.50,1.00 26.00,1.13 26.50,1.50 27.00,2.00 27.50,2.50 28.00,2.87 28.50,3.00 29.00,2.87 29.50,2.50 30.00,2.00 30.50,1.50 31.00,1.13 31.50,1.00 32.00,1.13 32.50,1.50 33.00,2.00 33.50,2.50 34.00,2.87 34.50,3.00 35.00,2.87 35.50,2.50 36.00,2.00 36.50,1.50 37.00,1.13 37.50,1.00 38.00,1.13 38.50,1.50 39.00,2.00 39.50,2.50 40.00,2.87 40.50,3.00 41.00,2.87 41.50,2.50 42.00,2.00 42.50,1.50 43.00,1.13 43.50,1.00 44.00,1.13 44.50,1.50 45.00,2.00 45.50,2.50 46.00,2.87 46.50,3.00 47.00,2.87 47.50,2.50 48.00,2.00 48.50,1.50 49.00,1.13 49.50,1.00 50.00,1.13 50.50,1.50 51.00,2.00 51.50,2.50 52.00,2.87 52.50,3.00 53.00,2.87 53.50,2.50 54.00,2.00 54.50,1.50 55.00,1.13 55.50,1.00 56.00,1.13 56.50,1.50 57.00,2.00 57.50,2.50 58.00,2.87 58.50,3.00 59.00,2.87 59.50,2.50 60.00,2.00 60.50,1.50 61.00,1.13 61.50,1.00 62.00,1.13 62.50,1.50 63.00,2.00 63.50,2.50 64.00,2.87 64.50,3.00 65.00,2.87 65.50,2.50 66.00,2.00 66.50,1.50 67.00,1.13 67.50,1.00 68.00,1.13 68.50,1.50 69.00,2.00 69.50,2.50 70.00,2.87 70.50,3.00 71.00,2.87 71.50,2.50 72.00,2.00 72.50,1.50 73.00,1.13 73.50,1.00 74.00,1.13 74.50,1.50 75.00,2.00 75.50,2.50 76.00,2.87 76.50,3.00 77.00,2.87 77.50,2.50" fill="none" stroke="#66b466" stroke-width="1.3"/></svg>
<div class="code" style="top:748.00px"><span class="k">select top </span><span class="n">100</span><span class="k"> Name from </span><span class="s">sys.columns</span></div>
<div class="code" style="top:764.20px"><span class="k">go</span></div>
<svg class="ab" style="left:40.5px;top:807.80px;overflow:visible" width="78" height="4"><polyline points="0.00,2.00 0.50,1.50 1.00,1.13 1.50,1.00 2.00,1.13 2.50,1.50 3.00,2.00 3.50,2.50 4.00,2.87 4.50,3.00 5.00,2.87 5.50,2.50 6.00,2.00 6.50,1.50 7.00,1.13 7.50,1.00 8.00,1.13 8.50,1.50 9.00,2.00 9.50,2.50 10.00,2.87 10.50,3.00 11.00,2.87 11.50,2.50 12.00,2.00 12.50,1.50 13.00,1.13 13.50,1.00 14.00,1.13 14.50,1.50 15.00,2.00 15.50,2.50 16.00,2.87 16.50,3.00 17.00,2.87 17.50,2.50 18.00,2.00 18.50,1.50 19.00,1.13 19.50,1.00 20.00,1.13 20.50,1.50 21.00,2.00 21.50,2.50 22.00,2.87 22.50,3.00 23.00,2.87 23.50,2.50 24.00,2.00 24.50,1.50 25.00,1.13 25.50,1.00 26.00,1.13 26.50,1.50 27.00,2.00 27.50,2.50 28.00,2.87 28.50,3.00 29.00,2.87 29.50,2.50 30.00,2.00 30.50,1.50 31.00,1.13 31.50,1.00 32.00,1.13 32.50,1.50 33.00,2.00 33.50,2.50 34.00,2.87 34.50,3.00 35.00,2.87 35.50,2.50 36.00,2.00 36.50,1.50 37.00,1.13 37.50,1.00 38.00,1.13 38.50,1.50 39.00,2.00 39.50,2.50 40.00,2.87 40.50,3.00 41.00,2.87 41.50,2.50 42.00,2.00 42.50,1.50 43.00,1.13 43.50,1.00 44.00,1.13 44.50,1.50 45.00,2.00 45.50,2.50 46.00,2.87 46.50,3.00 47.00,2.87 47.50,2.50 48.00,2.00 48.50,1.50 49.00,1.13 49.50,1.00 50.00,1.13 50.50,1.50 51.00,2.00 51.50,2.50 52.00,2.87 52.50,3.00 53.00,2.87 53.50,2.50 54.00,2.00 54.50,1.50 55.00,1.13 55.50,1.00 56.00,1.13 56.50,1.50 57.00,2.00 57.50,2.50 58.00,2.87 58.50,3.00 59.00,2.87 59.50,2.50 60.00,2.00 60.50,1.50 61.00,1.13 61.50,1.00 62.00,1.13 62.50,1.50 63.00,2.00 63.50,2.50 64.00,2.87 64.50,3.00 65.00,2.87 65.50,2.50 66.00,2.00 66.50,1.50 67.00,1.13 67.50,1.00 68.00,1.13 68.50,1.50 69.00,2.00 69.50,2.50 70.00,2.87 70.50,3.00 71.00,2.87 71.50,2.50 72.00,2.00 72.50,1.50 73.00,1.13 73.50,1.00 74.00,1.13 74.50,1.50 75.00,2.00 75.50,2.50 76.00,2.87 76.50,3.00 77.00,2.87 77.50,2.50" fill="none" stroke="#66b466" stroke-width="1.3"/></svg>
<svg class="ab" style="left:118.38px;top:807.80px;overflow:visible" width="14" height="4"><polyline points="0.00,2.00 0.50,1.50 1.00,1.13 1.50,1.00 2.00,1.13 2.50,1.50 3.00,2.00 3.50,2.50 4.00,2.87 4.50,3.00 5.00,2.87 5.50,2.50 6.00,2.00 6.50,1.50 7.00,1.13 7.50,1.00 8.00,1.13 8.50,1.50 9.00,2.00 9.50,2.50 10.00,2.87 10.50,3.00 11.00,2.87 11.50,2.50 12.00,2.00 12.50,1.50 13.00,1.13 13.50,1.00 14.00,1.13" fill="none" stroke="#66b466" stroke-width="1.3"/></svg>
<svg class="ab" style="left:132.54000000000002px;top:807.80px;overflow:visible" width="135" height="4"><polyline points="0.00,2.00 0.50,1.50 1.00,1.13 1.50,1.00 2.00,1.13 2.50,1.50 3.00,2.00 3.50,2.50 4.00,2.87 4.50,3.00 5.00,2.87 5.50,2.50 6.00,2.00 6.50,1.50 7.00,1.13 7.50,1.00 8.00,1.13 8.50,1.50 9.00,2.00 9.50,2.50 10.00,2.87 10.50,3.00 11.00,2.87 11.50,2.50 12.00,2.00 12.50,1.50 13.00,1.13 13.50,1.00 14.00,1.13 14.50,1.50 15.00,2.00 15.50,2.50 16.00,2.87 16.50,3.00 17.00,2.87 17.50,2.50 18.00,2.00 18.50,1.50 19.00,1.13 19.50,1.00 20.00,1.13 20.50,1.50 21.00,2.00 21.50,2.50 22.00,2.87 22.50,3.00 23.00,2.87 23.50,2.50 24.00,2.00 24.50,1.50 25.00,1.13 25.50,1.00 26.00,1.13 26.50,1.50 27.00,2.00 27.50,2.50 28.00,2.87 28.50,3.00 29.00,2.87 29.50,2.50 30.00,2.00 30.50,1.50 31.00,1.13 31.50,1.00 32.00,1.13 32.50,1.50 33.00,2.00 33.50,2.50 34.00,2.87 34.50,3.00 35.00,2.87 35.50,2.50 36.00,2.00 36.50,1.50 37.00,1.13 37.50,1.00 38.00,1.13 38.50,1.50 39.00,2.00 39.50,2.50 40.00,2.87 40.50,3.00 41.00,2.87 41.50,2.50 42.00,2.00 42.50,1.50 43.00,1.13 43.50,1.00 44.00,1.13 44.50,1.50 45.00,2.00 45.50,2.50 46.00,2.87 46.50,3.00 47.00,2.87 47.50,2.50 48.00,2.00 48.50,1.50 49.00,1.13 49.50,1.00 50.00,1.13 50.50,1.50 51.00,2.00 51.50,2.50 52.00,2.87 52.50,3.00 53.00,2.87 53.50,2.50 54.00,2.00 54.50,1.50 55.00,1.13 55.50,1.00 56.00,1.13 56.50,1.50 57.00,2.00 57.50,2.50 58.00,2.87 58.50,3.00 59.00,2.87 59.50,2.50 60.00,2.00 60.50,1.50 61.00,1.13 61.50,1.00 62.00,1.13 62.50,1.50 63.00,2.00 63.50,2.50 64.00,2.87 64.50,3.00 65.00,2.87 65.50,2.50 66.00,2.00 66.50,1.50 67.00,1.13 67.50,1.00 68.00,1.13 68.50,1.50 69.00,2.00 69.50,2.50 70.00,2.87 70.50,3.00 71.00,2.87 71.50,2.50 72.00,2.00 72.50,1.50 73.00,1.13 73.50,1.00 74.00,1.13 74.50,1.50 75.00,2.00 75.50,2.50 76.00,2.87 76.50,3.00 77.00,2.87 77.50,2.50 78.00,2.00 78.50,1.50 79.00,1.13 79.50,1.00 80.00,1.13 80.50,1.50 81.00,2.00 81.50,2.50 82.00,2.87 82.50,3.00 83.00,2.87 83.50,2.50 84.00,2.00 84.50,1.50 85.00,1.13 85.50,1.00 86.00,1.13 86.50,1.50 87.00,2.00 87.50,2.50 88.00,2.87 88.50,3.00 89.00,2.87 89.50,2.50 90.00,2.00 90.50,1.50 91.00,1.13 91.50,1.00 92.00,1.13 92.50,1.50 93.00,2.00 93.50,2.50 94.00,2.87 94.50,3.00 95.00,2.87 95.50,2.50 96.00,2.00 96.50,1.50 97.00,1.13 97.50,1.00 98.00,1.13 98.50,1.50 99.00,2.00 99.50,2.50 100.00,2.87 100.50,3.00 101.00,2.87 101.50,2.50 102.00,2.00 102.50,1.50 103.00,1.13 103.50,1.00 104.00,1.13 104.50,1.50 105.00,2.00 105.50,2.50 106.00,2.87 106.50,3.00 107.00,2.87 107.50,2.50 108.00,2.00 108.50,1.50 109.00,1.13 109.50,1.00 110.00,1.13 110.50,1.50 111.00,2.00 111.50,2.50 112.00,2.87 112.50,3.00 113.00,2.87 113.50,2.50 114.00,2.00 114.50,1.50 115.00,1.13 115.50,1.00 116.00,1.13 116.50,1.50 117.00,2.00 117.50,2.50 118.00,2.87 118.50,3.00 119.00,2.87 119.50,2.50 120.00,2.00 120.50,1.50 121.00,1.13 121.50,1.00 122.00,1.13 122.50,1.50 123.00,2.00 123.50,2.50 124.00,2.87 124.50,3.00 125.00,2.87 125.50,2.50 126.00,2.00 126.50,1.50 127.00,1.13 127.50,1.00 128.00,1.13 128.50,1.50 129.00,2.00 129.50,2.50 130.00,2.87 130.50,3.00 131.00,2.87 131.50,2.50 132.00,2.00 132.50,1.50 133.00,1.13 133.50,1.00 134.00,1.13 134.50,1.50" fill="none" stroke="#66b466" stroke-width="1.3"/></svg>
<svg class="ab" style="left:267.06px;top:807.80px;overflow:visible" width="78" height="4"><polyline points="0.00,2.00 0.50,1.50 1.00,1.13 1.50,1.00 2.00,1.13 2.50,1.50 3.00,2.00 3.50,2.50 4.00,2.87 4.50,3.00 5.00,2.87 5.50,2.50 6.00,2.00 6.50,1.50 7.00,1.13 7.50,1.00 8.00,1.13 8.50,1.50 9.00,2.00 9.50,2.50 10.00,2.87 10.50,3.00 11.00,2.87 11.50,2.50 12.00,2.00 12.50,1.50 13.00,1.13 13.50,1.00 14.00,1.13 14.50,1.50 15.00,2.00 15.50,2.50 16.00,2.87 16.50,3.00 17.00,2.87 17.50,2.50 18.00,2.00 18.50,1.50 19.00,1.13 19.50,1.00 20.00,1.13 20.50,1.50 21.00,2.00 21.50,2.50 22.00,2.87 22.50,3.00 23.00,2.87 23.50,2.50 24.00,2.00 24.50,1.50 25.00,1.13 25.50,1.00 26.00,1.13 26.50,1.50 27.00,2.00 27.50,2.50 28.00,2.87 28.50,3.00 29.00,2.87 29.50,2.50 30.00,2.00 30.50,1.50 31.00,1.13 31.50,1.00 32.00,1.13 32.50,1.50 33.00,2.00 33.50,2.50 34.00,2.87 34.50,3.00 35.00,2.87 35.50,2.50 36.00,2.00 36.50,1.50 37.00,1.13 37.50,1.00 38.00,1.13 38.50,1.50 39.00,2.00 39.50,2.50 40.00,2.87 40.50,3.00 41.00,2.87 41.50,2.50 42.00,2.00 42.50,1.50 43.00,1.13 43.50,1.00 44.00,1.13 44.50,1.50 45.00,2.00 45.50,2.50 46.00,2.87 46.50,3.00 47.00,2.87 47.50,2.50 48.00,2.00 48.50,1.50 49.00,1.13 49.50,1.00 50.00,1.13 50.50,1.50 51.00,2.00 51.50,2.50 52.00,2.87 52.50,3.00 53.00,2.87 53.50,2.50 54.00,2.00 54.50,1.50 55.00,1.13 55.50,1.00 56.00,1.13 56.50,1.50 57.00,2.00 57.50,2.50 58.00,2.87 58.50,3.00 59.00,2.87 59.50,2.50 60.00,2.00 60.50,1.50 61.00,1.13 61.50,1.00 62.00,1.13 62.50,1.50 63.00,2.00 63.50,2.50 64.00,2.87 64.50,3.00 65.00,2.87 65.50,2.50 66.00,2.00 66.50,1.50 67.00,1.13 67.50,1.00 68.00,1.13 68.50,1.50 69.00,2.00 69.50,2.50 70.00,2.87 70.50,3.00 71.00,2.87 71.50,2.50 72.00,2.00 72.50,1.50 73.00,1.13 73.50,1.00 74.00,1.13 74.50,1.50 75.00,2.00 75.50,2.50 76.00,2.87 76.50,3.00 77.00,2.87 77.50,2.50" fill="none" stroke="#66b466" stroke-width="1.3"/></svg>
<div class="code" style="top:796.60px"><span class="k">select top </span><span class="n">50</span><span class="k"> percent Name from </span><span class="s">sys.columns</span></div>
<div class="ab" style="left:748px;top:30px;width:17px;height:781px;background:#e8e8ec"></div>
<div class="ab" style="left:748px;top:30px;width:17px;height:16px;background:#e6ecf6;box-shadow:inset 0 0 0 1px #cdd4e0"></div>
<svg class="ab" style="left:748px;top:30px" width="17" height="17" viewBox="0 0 17 17"><path d="M3 7.6H14M3 9.4H14" stroke="#1f2f4f" stroke-width="1.1"/><path d="M8.5 3V6.5M8.5 10.5V14" stroke="#1f2f4f" stroke-width="1"/><path d="M6.8 4.3L8.5 2.2L10.2 4.3zM6.8 12.7L8.5 14.8L10.2 12.7z" fill="#1f2f4f"/></svg>
<svg class="ab" style="left:752px;top:53px" width="9" height="5" viewBox="0 0 9 5"><path d="M0.3 5L4.5 0.2L8.7 5z" fill="#8c8c90"/></svg>
<svg class="ab" style="left:752px;top:800px" width="9" height="5" viewBox="0 0 9 5"><path d="M0.3 0L4.5 4.8L8.7 0z" fill="#8c8c90"/></svg>
<div class="ab" style="left:752px;top:73px;width:8px;height:10px;background:#d0d1d7"></div>
<div class="ab" style="left:760px;top:61px;width:5.5px;height:21px;background:#ff0000"></div>
<div class="ab" style="left:760px;top:82px;width:5.5px;height:95px;background:#008000"></div>
<div class="ab" style="left:760px;top:177px;width:5.5px;height:15px;background:#ff0000"></div>
<div class="ab" style="left:760px;top:192px;width:5.5px;height:5px;background:#008000"></div>
<div class="ab" style="left:760px;top:197px;width:5.5px;height:10px;background:#ff0000"></div>
<div class="ab" style="left:760px;top:207px;width:5.5px;height:21px;background:#008000"></div>
<div class="ab" style="left:760px;top:228px;width:5.5px;height:6px;background:#ff0000"></div>
<div class="ab" style="left:760px;top:234px;width:5.5px;height:14px;background:#008000"></div>
<div class="ab" style="left:760px;top:248px;width:5.5px;height:20px;background:#ff0000"></div>
<div class="ab" style="left:760px;top:268px;width:5.5px;height:5px;background:#008000"></div>
<div class="ab" style="left:760px;top:273px;width:5.5px;height:31px;background:#ff0000"></div>
<div class="ab" style="left:760px;top:304px;width:5.5px;height:34px;background:#008000"></div>
<div class="ab" style="left:760px;top:338px;width:5.5px;height:7px;background:#ff0000"></div>
<div class="ab" style="left:760px;top:345px;width:5.5px;height:2px;background:#008000"></div>
<div class="ab" style="left:760px;top:353px;width:5.5px;height:70px;background:#008000"></div>
<div class="ab" style="left:760px;top:423px;width:5.5px;height:7px;background:#ff0000"></div>
<div class="ab" style="left:760px;top:430px;width:5.5px;height:7px;background:#008000"></div>
<div class="ab" style="left:760px;top:437px;width:5.5px;height:11px;background:#ff0000"></div>
<div class="ab" style="left:760px;top:448px;width:5.5px;height:5px;background:#008000"></div>
<div class="ab" style="left:760px;top:453px;width:5.5px;height:11px;background:#ff0000"></div>
<div class="ab" style="left:760px;top:464px;width:5.5px;height:36px;background:#008000"></div>
<div class="ab" style="left:760px;top:500px;width:5.5px;height:6px;background:#ff0000"></div>
<div class="ab" style="left:760px;top:517px;width:5.5px;height:9px;background:#008000"></div>
<div class="ab" style="left:760px;top:526px;width:5.5px;height:15px;background:#ff0000"></div>
<div class="ab" style="left:760px;top:541px;width:5.5px;height:44px;background:#008000"></div>
<div class="ab" style="left:760px;top:585px;width:5.5px;height:6px;background:#ff0000"></div>
<div class="ab" style="left:760px;top:591px;width:5.5px;height:26px;background:#008000"></div>
<div class="ab" style="left:760px;top:617px;width:5.5px;height:6px;background:#ff0000"></div>
<div class="ab" style="left:760px;top:623px;width:5.5px;height:9px;background:#008000"></div>
<div class="ab" style="left:760px;top:632px;width:5.5px;height:18px;background:#ff0000"></div>
<div class="ab" style="left:760px;top:650px;width:5.5px;height:17px;background:#008000"></div>
<div class="ab" style="left:760px;top:667px;width:5.5px;height:27px;background:#ff0000"></div>
<div class="ab" style="left:760px;top:694px;width:5.5px;height:75px;background:#008000"></div>
<div class="ab" style="left:760px;top:769px;width:5.5px;height:12px;background:#ff0000"></div>
<div class="ab" style="left:760px;top:781px;width:5.5px;height:3px;background:#008000"></div>
<div class="ab" style="left:748px;top:83.5px;width:12px;height:2px;background:#2a62b0"></div>
<div class="ab" style="left:2px;top:811px;width:763px;height:18px;background:#e8e8ec"></div>
<div class="ab" style="left:2px;top:811px;width:59px;height:16px;background:#fff;border:1px solid #cfd6e3"></div>
<div class="ab" style="left:4.5px;top:812.5px;font-size:11.5px;letter-spacing:-0.25px;line-height:16px;color:#1e1e1e;white-space:pre">100 %</div>
<svg class="ab" style="left:53.5px;top:819.5px" width="6" height="3" viewBox="0 0 6 3"><path d="M0 0H6L3 3z" fill="#1e2a44"/></svg>
<svg class="ab" style="left:69px;top:815px" width="6" height="10" viewBox="0 0 6 10"><path d="M5 0.5V9.5L0.5 5z" fill="#9a9aa4"/></svg>
<div class="ab" style="left:80px;top:816px;width:592px;height:8.5px;background:#cdd0d9"></div>
<svg class="ab" style="left:736px;top:815px" width="7" height="10" viewBox="0 0 7 10"><path d="M1 0.5V9.5L5.5 5z" fill="#9a9aa4"/></svg>
<div class="ab" style="left:2px;top:829px;width:763px;height:2px;background:#f5e9a6"></div>
<div class="ab" style="left:773px;top:9px;width:590px;height:21px;background:#fff29d"></div>
<div class="ab" style="left:778px;top:13px;font-size:12px;letter-spacing:-0.17px;line-height:16px;color:#1e1e1e;white-space:pre">List of Code Analysis Issues</div>
<svg class="ab" style="left:1314px;top:17px" width="8" height="5" viewBox="0 0 8 5"><path d="M0 0.3H8L4 4.7z" fill="#3b3320"/></svg>
<svg class="ab" style="left:1330px;top:14px" width="10" height="12" viewBox="0 0 10 12"><path d="M3 1.5H7M3.5 1.5V7M6.5 1.5V7M1.5 7.5H8.5M5 7.5V11.5" fill="none" stroke="#3b3320" stroke-width="1.1"/></svg>
<svg class="ab" style="left:1346px;top:14.5px" width="11" height="10" viewBox="0 0 11 10"><path d="M1 0.8L10 9.2M10 0.8L1 9.2" fill="none" stroke="#3b3320" stroke-width="1.3"/></svg>
<div class="ab" style="left:773px;top:30px;width:590px;height:801px;background:#fff"></div>
<div class="ab" style="left:784px;top:47px;font-size:12px;letter-spacing:-0.3px;line-height:16px;color:#1e1e1e;white-space:pre">Discovered issues:</div>
<div class="ab" style="left:885px;top:47px;font-size:12px;font-weight:bold;line-height:16px;color:#1e1e1e;white-space:pre">732</div>
<svg class="ab" style="left:935px;top:46px" width="16" height="16" viewBox="0 0 16 16"><path d="M2.31 7.6A5.7 5.7 0 0 1 12.9 5.2M13.69 8.4A5.7 5.7 0 0 1 3.1 10.8" fill="none" stroke="#3b78bd" stroke-width="1.6"/><path d="M10.9 5.6L15.0 3.9L14.3 8.1zM5.1 10.4L1.0 12.1L1.7 7.9z" fill="#2f6db5"/></svg>
<div class="ab" style="left:954px;top:47px;font-size:12px;letter-spacing:-0.28px;line-height:16px;color:#3d77b8;white-space:pre">Refresh</div>
<svg class="ab" style="left:1008px;top:46px" width="14" height="16" viewBox="0 0 14 16"><path d="M3.9 5.3V2.7H11.9V13.1H3.9V10.7" fill="none" stroke="#3b78bd" stroke-width="1.4"/><path d="M1.2 8H6.6" stroke="#2f6db5" stroke-width="2"/><path d="M5.8 5.4L9.2 8L5.8 10.6z" fill="#2f6db5"/></svg>
<div class="ab" style="left:1026px;top:47px;font-size:12px;line-height:16px;color:#3d77b8;white-space:pre">Export</div>
<div class="ab" style="left:1189px;top:47px;font-size:12px;line-height:16px;color:#1e1e1e;white-space:pre">Group by:</div>
<div class="ab" style="left:1251px;top:41px;width:99px;height:24px;border:1px solid #c9c9c9;background:#fff"></div>
<div class="ab" style="left:1254.5px;top:47px;font-size:12px;letter-spacing:-0.3px;line-height:16px;color:#1e1e1e;white-space:pre">Issue</div>
<svg class="ab" style="left:1337px;top:52px" width="9" height="5" viewBox="0 0 9 5"><path d="M0.3 0.3H8.7L4.5 4.7z" fill="#717171"/></svg>
<div class="ab" style="left:784px;top:88px;font-size:12px;font-weight:bold;line-height:16px;color:#1e1e1e">Code</div>
<div class="ab" style="left:885px;top:88px;font-size:12px;font-weight:bold;line-height:16px;color:#1e1e1e">Issue</div>
<div class="ab" style="left:1287px;top:88px;font-size:12px;font-weight:bold;line-height:16px;color:#1e1e1e">Line</div>
<div class="ab" style="left:784px;top:108px;width:554px;height:2px;background:#dcdcdc"></div>
<div class="grp" style="top:110.60px"></div>
<svg class="ab" style="left:790px;top:116.3px;overflow:visible" width="16" height="16" viewBox="0 0 16 16"><circle cx="8" cy="8" r="9.1" fill="none" stroke="#2b2b2b" stroke-width="1.4"/><path d="M4.5 6.8L8.1 10.1L11.7 6.8" fill="none" stroke="#2b2b2b" stroke-width="2.1"/></svg>
<div class="gtx" style="left:821px;top:116.60px;letter-spacing:-0.5px">PE001</div>
<div class="gtx" style="left:862px;top:116.60px">(28)  -</div>
<div class="gtx" style="left:900.0px;top:116.60px;letter-spacing:-0.089px">Schema name for procedure is not specified</div>
<div class="grp" style="top:139.95px"></div>
<svg class="ab" style="left:790px;top:145.6px;overflow:visible" width="16" height="16" viewBox="0 0 16 16"><circle cx="8" cy="8" r="9.1" fill="none" stroke="#2b2b2b" stroke-width="1.4"/><path d="M4.5 6.8L8.1 10.1L11.7 6.8" fill="none" stroke="#2b2b2b" stroke-width="2.1"/></svg>
<div class="gtx" style="left:821px;top:145.95px;letter-spacing:-0.5px">ST008</div>
<div class="gtx" style="left:862px;top:145.95px">(29)  -</div>
<div class="gtx" style="left:900.1px;top:145.95px;letter-spacing:-0.007px">Non-named parameter style used</div>
<div class="grp" style="top:169.30px"></div>
<svg class="ab" style="left:790px;top:175.0px;overflow:visible" width="16" height="16" viewBox="0 0 16 16"><circle cx="8" cy="8" r="9.1" fill="none" stroke="#2b2b2b" stroke-width="1.4"/><path d="M4.5 6.8L8.1 10.1L11.7 6.8" fill="none" stroke="#2b2b2b" stroke-width="2.1"/></svg>
<div class="gtx" style="left:821px;top:175.30px;letter-spacing:-0.5px">BP001</div>
<div class="gtx" style="left:862px;top:175.30px">(4)  -</div>
<div class="gtx" style="left:893.4px;top:175.30px;letter-spacing:-0.079px">Index type is not specified</div>
<div class="grp" style="top:198.65px"></div>
<svg class="ab" style="left:790px;top:204.3px;overflow:visible" width="16" height="16" viewBox="0 0 16 16"><circle cx="8" cy="8" r="9.1" fill="none" stroke="#a3a3a3" stroke-width="1.4"/><path d="M4.5 8.6L8.1 5.3L11.7 8.6" fill="none" stroke="#a3a3a3" stroke-width="2.1"/></svg>
<div class="gtx" style="left:821px;top:204.65px;letter-spacing:-0.5px">BP002</div>
<div class="gtx" style="left:862px;top:204.65px">(4)  -</div>
<div class="gtx" style="left:893.4px;top:204.65px;letter-spacing:-0.323px">ORDER BY clause with constants</div>
<div class="ab" style="left:784px;top:226.05px;width:554px;height:1px;background:#fff"></div>
<div class="child" style="top:226.95px"></div>
<div class="ct" style="left:786px;top:233.05px">BP002</div>
<div class="ct" style="left:887px;top:233.05px">ORDER BY clause with constants</div>
<div class="ct" style="left:1289px;top:233.05px">18</div>
<div class="child" style="top:252.22px"></div>
<div class="ct" style="left:786px;top:258.32px">BP002</div>
<div class="ct" style="left:887px;top:258.32px">ORDER BY clause with constants</div>
<div class="ct" style="left:1289px;top:258.32px">18</div>
<div class="child" style="top:277.49px"></div>
<div class="ct" style="left:786px;top:283.59px">BP002</div>
<div class="ct" style="left:887px;top:283.59px">ORDER BY clause with constants</div>
<div class="ct" style="left:1289px;top:283.59px">18</div>
<div class="child" style="top:302.76px"></div>
<div class="ct" style="left:786px;top:308.86px">BP002</div>
<div class="ct" style="left:887px;top:308.86px">ORDER BY clause with constants</div>
<div class="ct" style="left:1289px;top:308.86px">696</div>
<div class="grp" style="top:330.13px"></div>
<svg class="ab" style="left:790px;top:335.8px;overflow:visible" width="16" height="16" viewBox="0 0 16 16"><circle cx="8" cy="8" r="9.1" fill="none" stroke="#2b2b2b" stroke-width="1.4"/><path d="M4.5 6.8L8.1 10.1L11.7 6.8" fill="none" stroke="#2b2b2b" stroke-width="2.1"/></svg>
<div class="gtx" style="left:821px;top:336.13px;letter-spacing:-0.5px">BP003</div>
<div class="gtx" style="left:862px;top:336.13px">(1)  -</div>
<div class="gtx" style="left:892.9px;top:336.13px;letter-spacing:-0.405px">SELECT in trigger</div>
<div class="grp" style="top:359.48px"></div>
<svg class="ab" style="left:790px;top:365.2px;overflow:visible" width="16" height="16" viewBox="0 0 16 16"><circle cx="8" cy="8" r="9.1" fill="none" stroke="#2b2b2b" stroke-width="1.4"/><path d="M4.5 6.8L8.1 10.1L11.7 6.8" fill="none" stroke="#2b2b2b" stroke-width="2.1"/></svg>
<div class="gtx" style="left:821px;top:365.48px;letter-spacing:-0.5px">BP004</div>
<div class="gtx" style="left:862px;top:365.48px">(4)  -</div>
<div class="gtx" style="left:892.9px;top:365.48px;letter-spacing:-0.107px">INSERT without column list</div>
<div class="grp" style="top:388.83px"></div>
<svg class="ab" style="left:790px;top:394.5px;overflow:visible" width="16" height="16" viewBox="0 0 16 16"><circle cx="8" cy="8" r="9.1" fill="none" stroke="#2b2b2b" stroke-width="1.4"/><path d="M4.5 6.8L8.1 10.1L11.7 6.8" fill="none" stroke="#2b2b2b" stroke-width="2.1"/></svg>
<div class="gtx" style="left:821px;top:394.83px;letter-spacing:-0.5px">BP005</div>
<div class="gtx" style="left:862px;top:394.83px">(74)  -</div>
<div class="gtx" style="left:900.6px;top:394.83px;letter-spacing:-0.204px">Asterisk in select list</div>
<div class="grp" style="top:418.18px"></div>
<svg class="ab" style="left:790px;top:423.9px;overflow:visible" width="16" height="16" viewBox="0 0 16 16"><circle cx="8" cy="8" r="9.1" fill="none" stroke="#2b2b2b" stroke-width="1.4"/><path d="M4.5 6.8L8.1 10.1L11.7 6.8" fill="none" stroke="#2b2b2b" stroke-width="2.1"/></svg>
<div class="gtx" style="left:821px;top:424.18px;letter-spacing:-0.5px">BP006</div>
<div class="gtx" style="left:862px;top:424.18px">(6)  -</div>
<div class="gtx" style="left:893.6px;top:424.18px;letter-spacing:-0.211px">TOP without ORDER BY</div>
<div class="grp" style="top:447.53px"></div>
<svg class="ab" style="left:790px;top:453.2px;overflow:visible" width="16" height="16" viewBox="0 0 16 16"><circle cx="8" cy="8" r="9.1" fill="none" stroke="#2b2b2b" stroke-width="1.4"/><path d="M4.5 6.8L8.1 10.1L11.7 6.8" fill="none" stroke="#2b2b2b" stroke-width="2.1"/></svg>
<div class="gtx" style="left:821px;top:453.53px;letter-spacing:-0.5px">ST006</div>
<div class="gtx" style="left:862px;top:453.53px">(16)  -</div>
<div class="gtx" style="left:900.6px;top:453.53px;letter-spacing:-0.326px">Old-style TOP clause is used</div>
<div class="grp" style="top:476.88px"></div>
<svg class="ab" style="left:790px;top:482.6px;overflow:visible" width="16" height="16" viewBox="0 0 16 16"><circle cx="8" cy="8" r="9.1" fill="none" stroke="#2b2b2b" stroke-width="1.4"/><path d="M4.5 6.8L8.1 10.1L11.7 6.8" fill="none" stroke="#2b2b2b" stroke-width="2.1"/></svg>
<div class="gtx" style="left:821px;top:482.88px;letter-spacing:-0.5px">BP007</div>
<div class="gtx" style="left:862px;top:482.88px">(8)  -</div>
<div class="gtx" style="left:893.6px;top:482.88px;letter-spacing:0.010px">Variable length datatype without explicit length</div>
<div class="grp" style="top:506.23px"></div>
<svg class="ab" style="left:790px;top:511.9px;overflow:visible" width="16" height="16" viewBox="0 0 16 16"><circle cx="8" cy="8" r="9.1" fill="none" stroke="#2b2b2b" stroke-width="1.4"/><path d="M4.5 6.8L8.1 10.1L11.7 6.8" fill="none" stroke="#2b2b2b" stroke-width="2.1"/></svg>
<div class="gtx" style="left:821px;top:512.23px;letter-spacing:-0.5px">MI005</div>
<div class="gtx" style="left:862px;top:512.23px">(55)  -</div>
<div class="gtx" style="left:900.6px;top:512.23px;letter-spacing:-0.134px">Variable is declared but never used</div>
<div class="grp" style="top:535.58px"></div>
<svg class="ab" style="left:790px;top:541.3px;overflow:visible" width="16" height="16" viewBox="0 0 16 16"><circle cx="8" cy="8" r="9.1" fill="none" stroke="#2b2b2b" stroke-width="1.4"/><path d="M4.5 6.8L8.1 10.1L11.7 6.8" fill="none" stroke="#2b2b2b" stroke-width="2.1"/></svg>
<div class="gtx" style="left:821px;top:541.58px;letter-spacing:-0.5px">BP008</div>
<div class="gtx" style="left:862px;top:541.58px">(9)  -</div>
<div class="gtx" style="left:893.6px;top:541.58px;letter-spacing:-0.107px">CAST/CONVERT to var types without length</div>
<div class="grp" style="top:564.93px"></div>
<svg class="ab" style="left:790px;top:570.6px;overflow:visible" width="16" height="16" viewBox="0 0 16 16"><circle cx="8" cy="8" r="9.1" fill="none" stroke="#2b2b2b" stroke-width="1.4"/><path d="M4.5 6.8L8.1 10.1L11.7 6.8" fill="none" stroke="#2b2b2b" stroke-width="2.1"/></svg>
<div class="gtx" style="left:821px;top:570.93px;letter-spacing:-0.5px">BP009</div>
<div class="gtx" style="left:862px;top:570.93px">(6)  -</div>
<div class="gtx" style="left:893.6px;top:570.93px;letter-spacing:-0.025px">Avoid var types of length 1 or 2</div>
<div class="grp" style="top:594.28px"></div>
<svg class="ab" style="left:790px;top:600.0px;overflow:visible" width="16" height="16" viewBox="0 0 16 16"><circle cx="8" cy="8" r="9.1" fill="none" stroke="#2b2b2b" stroke-width="1.4"/><path d="M4.5 6.8L8.1 10.1L11.7 6.8" fill="none" stroke="#2b2b2b" stroke-width="2.1"/></svg>
<div class="gtx" style="left:821px;top:600.28px;letter-spacing:-0.5px">BP010</div>
<div class="gtx" style="left:862px;top:600.28px">(2)  -</div>
<div class="gtx" style="left:893.6px;top:600.28px;letter-spacing:-0.166px">Usage of @@IDENTITY</div>
<div class="grp" style="top:623.63px"></div>
<svg class="ab" style="left:790px;top:629.3px;overflow:visible" width="16" height="16" viewBox="0 0 16 16"><circle cx="8" cy="8" r="9.1" fill="none" stroke="#2b2b2b" stroke-width="1.4"/><path d="M4.5 6.8L8.1 10.1L11.7 6.8" fill="none" stroke="#2b2b2b" stroke-width="2.1"/></svg>
<div class="gtx" style="left:821px;top:629.63px;letter-spacing:-0.5px">BP011</div>
<div class="gtx" style="left:862px;top:629.63px">(7)  -</div>
<div class="gtx" style="left:893.6px;top:629.63px;letter-spacing:-0.218px">NULL comparison or addition/substring</div>
<div class="grp" style="top:652.98px"></div>
<svg class="ab" style="left:790px;top:658.7px;overflow:visible" width="16" height="16" viewBox="0 0 16 16"><circle cx="8" cy="8" r="9.1" fill="none" stroke="#2b2b2b" stroke-width="1.4"/><path d="M4.5 6.8L8.1 10.1L11.7 6.8" fill="none" stroke="#2b2b2b" stroke-width="2.1"/></svg>
<div class="gtx" style="left:821px;top:658.98px;letter-spacing:-0.5px">ST013</div>
<div class="gtx" style="left:862px;top:658.98px">(5)  -</div>
<div class="gtx" style="left:893.6px;top:658.98px;letter-spacing:-0.133px">Non-ANSI NOT_EQUAL operator used (!=)</div>
<div class="grp" style="top:682.33px"></div>
<svg class="ab" style="left:790px;top:688.0px;overflow:visible" width="16" height="16" viewBox="0 0 16 16"><circle cx="8" cy="8" r="9.1" fill="none" stroke="#2b2b2b" stroke-width="1.4"/><path d="M4.5 6.8L8.1 10.1L11.7 6.8" fill="none" stroke="#2b2b2b" stroke-width="2.1"/></svg>
<div class="gtx" style="left:821px;top:688.33px;letter-spacing:-0.5px">BP012</div>
<div class="gtx" style="left:862px;top:688.33px">(2)  -</div>
<div class="gtx" style="left:893.6px;top:688.33px;letter-spacing:-0.581px">CASE without ELSE</div>
<div class="grp" style="top:711.68px"></div>
<svg class="ab" style="left:790px;top:717.4px;overflow:visible" width="16" height="16" viewBox="0 0 16 16"><circle cx="8" cy="8" r="9.1" fill="none" stroke="#2b2b2b" stroke-width="1.4"/><path d="M4.5 6.8L8.1 10.1L11.7 6.8" fill="none" stroke="#2b2b2b" stroke-width="2.1"/></svg>
<div class="gtx" style="left:821px;top:717.68px;letter-spacing:-0.5px">BP013</div>
<div class="gtx" style="left:862px;top:717.68px">(4)  -</div>
<div class="gtx" style="left:893.6px;top:717.68px;letter-spacing:-0.440px">EXECUTE(&#x27;SQL script&#x27;) is used</div>
<div class="grp" style="top:741.03px"></div>
<svg class="ab" style="left:790px;top:746.7px;overflow:visible" width="16" height="16" viewBox="0 0 16 16"><circle cx="8" cy="8" r="9.1" fill="none" stroke="#2b2b2b" stroke-width="1.4"/><path d="M4.5 6.8L8.1 10.1L11.7 6.8" fill="none" stroke="#2b2b2b" stroke-width="2.1"/></svg>
<div class="gtx" style="left:821px;top:747.03px;letter-spacing:-0.5px">PE023</div>
<div class="gtx" style="left:862px;top:747.03px">(68)  -</div>
<div class="gtx" style="left:900.6px;top:747.03px;letter-spacing:-0.076px">DDL without specifying a schema name for table</div>
<div class="grp" style="top:770.38px"></div>
<svg class="ab" style="left:790px;top:776.1px;overflow:visible" width="16" height="16" viewBox="0 0 16 16"><circle cx="8" cy="8" r="9.1" fill="none" stroke="#2b2b2b" stroke-width="1.4"/><path d="M4.5 6.8L8.1 10.1L11.7 6.8" fill="none" stroke="#2b2b2b" stroke-width="2.1"/></svg>
<div class="gtx" style="left:821px;top:776.38px;letter-spacing:-0.5px">BP014</div>
<div class="gtx" style="left:862px;top:776.38px">(40)  -</div>
<div class="gtx" style="left:900.7px;top:776.38px;letter-spacing:-0.337px">[NOT] NULL option is not specified in CREATE/DECLARE TABLE statement</div>
<div class="grp" style="top:799.73px"></div>
<svg class="ab" style="left:790px;top:805.4px;overflow:visible" width="16" height="16" viewBox="0 0 16 16"><circle cx="8" cy="8" r="9.1" fill="none" stroke="#2b2b2b" stroke-width="1.4"/><path d="M4.5 6.8L8.1 10.1L11.7 6.8" fill="none" stroke="#2b2b2b" stroke-width="2.1"/></svg>
<div class="gtx" style="left:821px;top:805.73px;letter-spacing:-0.5px">MI001</div>
<div class="gtx" style="left:862px;top:805.73px">(8)  -</div>
<div class="gtx" style="left:893.1px;top:805.73px;letter-spacing:-0.124px">Table var is declared but never used</div>
<div class="grp" style="top:829.08px"></div>
<svg class="ab" style="left:1340px;top:116px" width="11" height="6" viewBox="0 0 11 6"><path d="M0.3 6L5.5 0.3L10.7 6z" fill="#3c3c3c"/></svg>
<div class="ab" style="left:1339px;top:128px;width:12px;height:188px;background:#bababa"></div>
<div class="ab" style="left:1339px;top:128px;width:12px;height:28px;background:#b5bac4"></div>
<svg class="ab" style="left:795px;top:214px" width="12" height="18" viewBox="0 0 12 18"><path d="M1 1V14.5L4.2 11.6L6.5 16.6L8.6 15.7L6.3 10.8H10.5z" fill="#fff" stroke="#222" stroke-width="0.9" stroke-linejoin="round"/></svg>
</body></html>
